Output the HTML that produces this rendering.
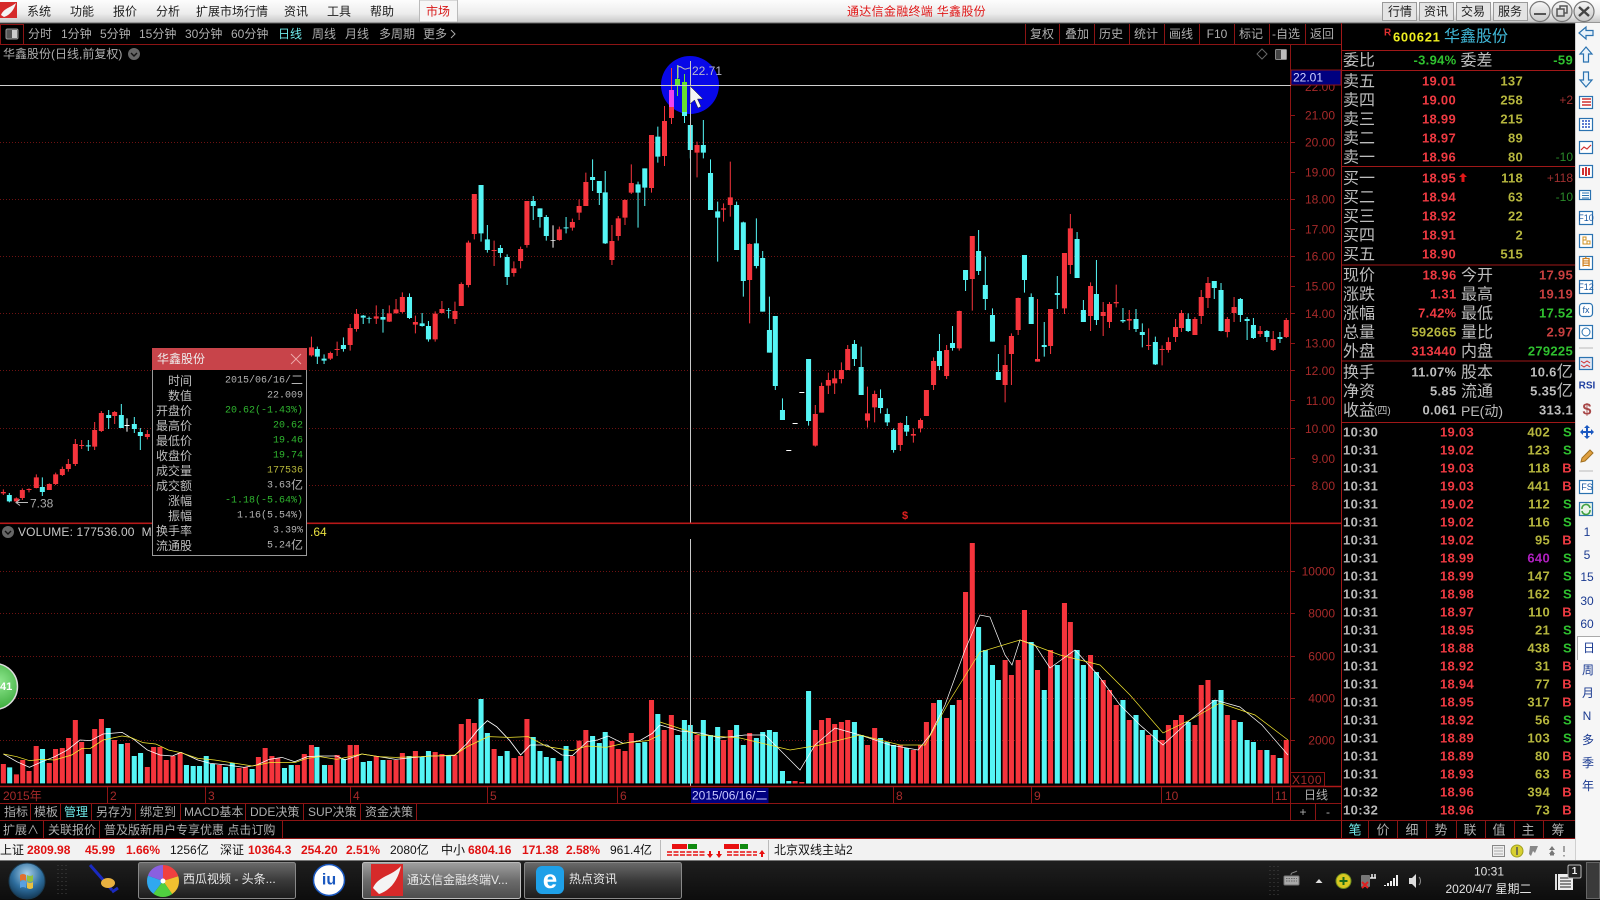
<!DOCTYPE html>
<html><head><meta charset="utf-8"><title>通达信金融终端 华鑫股份</title>
<style>
html,body{margin:0;padding:0;background:#000;width:1600px;height:900px;overflow:hidden}
svg{display:block;position:absolute;left:0;top:0}
text{font-family:"Liberation Sans","Noto Sans CJK SC",sans-serif;dominant-baseline:central;white-space:pre}
.m{font-size:12px;fill:#1c1c1c}
.g{font-size:12px;fill:#aeaeae}
.gm{font-size:12px;fill:#aeaeae;text-anchor:middle}
.a{font-size:12px;fill:#a62a2a;text-anchor:end}
.d{font-size:12px;fill:#a62a2a}
.l{font-size:16px;fill:#bdbdbd;transform:translateY(1.2px)}
.v{font-size:13px;font-weight:bold;text-anchor:end;letter-spacing:.3px}
.r{fill:#ef3a42}.y{fill:#b6b63e}.gr{fill:#2fc02f}.w{fill:#bdbdbd}
.s{font-size:12px;text-anchor:end}
.tm{font-size:13px;font-weight:bold;fill:#b8b8b8;letter-spacing:.4px}
.tl{font-size:12px;fill:#bdbdbd;text-anchor:end;transform:translateY(1px)}
.tv{font-family:"Liberation Mono","Noto Sans CJK SC",monospace;font-size:10px;fill:#b4b4b4;text-anchor:end;transform:translateY(1px)}
.st{font-size:12px;font-weight:bold;fill:#e01010}
.sk{font-size:12px;fill:#111}
.bl{font-size:12px;fill:#1a3a90;text-anchor:middle}
.tb{font-size:12px;fill:#e8e8e8}
</style></head><body>
<svg width="1600" height="900" viewBox="0 0 1600 900" xmlns="http://www.w3.org/2000/svg">
<defs>
<linearGradient id="tg" x1="0" y1="0" x2="0" y2="1"><stop offset="0" stop-color="#fdfdfd"/><stop offset=".6" stop-color="#ececec"/><stop offset="1" stop-color="#c4c4c4"/></linearGradient>
<linearGradient id="bar" x1="0" y1="0" x2="0" y2="1"><stop offset="0" stop-color="#1f1f1f"/><stop offset="1" stop-color="#0d0d0d"/></linearGradient>
<linearGradient id="btn" x1="0" y1="0" x2="0" y2="1"><stop offset="0" stop-color="#6a6a6a"/><stop offset=".5" stop-color="#3a3a3a"/><stop offset="1" stop-color="#1c1c1c"/></linearGradient>
<linearGradient id="btn2" x1="0" y1="0" x2="0" y2="1"><stop offset="0" stop-color="#a0a0a0"/><stop offset=".5" stop-color="#6c6c6c"/><stop offset="1" stop-color="#4c4c4c"/></linearGradient>
<radialGradient id="orb" cx=".5" cy=".3" r=".75"><stop offset="0" stop-color="#a8d0ea"/><stop offset=".55" stop-color="#2f6f9f"/><stop offset="1" stop-color="#0e2e48"/></radialGradient>
<radialGradient id="gc" cx=".6" cy=".4" r=".7"><stop offset="0" stop-color="#8fe88f"/><stop offset="1" stop-color="#2ea02e"/></radialGradient>
<linearGradient id="cb" x1="0" y1="0" x2="0" y2="1"><stop offset="0" stop-color="#f6f6f6"/><stop offset="1" stop-color="#c9c9c9"/></linearGradient>
</defs>
<rect width="1600" height="900" fill="#000"/>

<!-- title bar -->
<rect x="0" y="0" width="1600" height="23" fill="url(#tg)"/>
<rect x="0" y="22.5" width="1600" height="1" fill="#666"/>
<rect x="0" y="2" width="17" height="16" fill="#d62a2a"/>
<path d="M1 15C4 8 10 8 16 3C14 10 10 15 4 17Z" fill="#f4f4f4"/>
<text class="m" x="27" y="11.5">系统</text><text class="m" x="70" y="11.5">功能</text><text class="m" x="113" y="11.5">报价</text><text class="m" x="156" y="11.5">分析</text><text class="m" x="196" y="11.5">扩展市场行情</text><text class="m" x="284" y="11.5">资讯</text><text class="m" x="327" y="11.5">工具</text><text class="m" x="370" y="11.5">帮助</text>
<rect x="419.5" y="0" width="38" height="22" fill="#f6f6f6" stroke="#bbb"/>
<text x="426" y="11.5" style="font-size:12px;fill:#d81818">市场</text>
<text x="847" y="11.5" style="font-size:12px;fill:#e01818;letter-spacing:.3px">通达信金融终端 华鑫股份</text>
<g fill="#e4e4e4" stroke="#9a9a9a"><rect x="1382.5" y="2.5" width="34" height="18"/><rect x="1419.5" y="2.5" width="34" height="18"/><rect x="1456.5" y="2.5" width="34" height="18"/><rect x="1493.5" y="2.5" width="34" height="18"/></g>
<text class="m" x="1388" y="11.5">行情</text><text class="m" x="1424" y="11.5">资讯</text><text class="m" x="1461" y="11.5">交易</text><text class="m" x="1498" y="11.5">服务</text>
<g fill="url(#cb)" stroke="#777" stroke-width="1.2"><circle cx="1540" cy="11.5" r="10"/><circle cx="1562" cy="11.5" r="10"/><circle cx="1584" cy="11.5" r="10"/></g>
<path d="M1534 14H1546" stroke="#555" stroke-width="2"/>
<path d="M1557 9h7v7h-7zM1560 9V6h7v7h-3" fill="none" stroke="#555" stroke-width="1.5"/>
<path d="M1579 7l10 9M1589 7l-10 9" stroke="#444" stroke-width="2.4"/>

<!-- toolbar -->
<rect x="0.5" y="24.5" width="23" height="20" fill="none" stroke="#8c1414"/>
<rect x="6" y="29" width="12" height="10" rx="1.5" fill="#555" stroke="#999"/><rect x="12" y="30" width="5" height="8" fill="#ccc"/>
<text class="g" x="28" y="34">分时</text><text class="g" x="61" y="34">1分钟</text><text class="g" x="100" y="34">5分钟</text><text class="g" x="139" y="34">15分钟</text><text class="g" x="185" y="34">30分钟</text><text class="g" x="231" y="34">60分钟</text>
<text x="278" y="34" style="font-size:12px;fill:#6fe8e8">日线</text>
<text class="g" x="312" y="34">周线</text><text class="g" x="345" y="34">月线</text><text class="g" x="379" y="34">多周期</text><text class="g" x="423" y="34">更多</text>
<path d="M451 30l4 4l-4 4" fill="none" stroke="#aaa"/>
<path d="M1025.5 24V44M1059.5 24V44M1094.5 24V44M1129.5 24V44M1164.5 24V44M1199.5 24V44M1234.5 24V44M1269.5 24V44M1305.5 24V44" stroke="#8c1414"/>
<text class="gm" x="1042" y="34">复权</text><text class="gm" x="1077" y="34">叠加</text><text class="gm" x="1111" y="34">历史</text><text class="gm" x="1146" y="34">统计</text><text class="gm" x="1181" y="34">画线</text><text class="gm" x="1217" y="34">F10</text><text class="gm" x="1251" y="34">标记</text><text class="gm" x="1286" y="34">-自选</text><text class="gm" x="1322" y="34">返回</text>
<rect x="0" y="44" width="1341" height="1" fill="#8c1414"/>

<!-- chart header -->
<text class="g" x="3" y="54">华鑫股份(日线,前复权)</text>
<circle cx="134" cy="54" r="6" fill="#666"/><path d="M131 53l3 3l3-3" fill="none" stroke="#111" stroke-width="1.4"/>
<path d="M1262 49l5 5l-5 5l-5-5z" fill="none" stroke="#666"/>
<rect x="1275.5" y="49.5" width="11" height="10" rx="1" fill="#444" stroke="#888"/><rect x="1281" y="50" width="5" height="9" fill="#bbb"/>

<!-- grid -->
<path d="M0 142.5H1290M0 199.5H1290M0 256.5H1290M0 313.5H1290M0 370.5H1290M0 428.5H1290M0 485.5H1290M0 571.5H1290M0 613.5H1290M0 656.5H1290M0 698.5H1290M0 740.5H1290" stroke="#6e1212" stroke-dasharray="1 2"/>

<!-- price axis -->
<path d="M1290.5 45V820" stroke="#8c1414"/>
<path d="M1291 115.5h4M1291 142.5h4M1291 172.5h4M1291 199.5h4M1291 229.5h4M1291 256.5h4M1291 286.5h4M1291 313.5h4M1291 343.5h4M1291 370.5h4M1291 400.5h4M1291 428.5h4M1291 458.5h4M1291 485.5h4M1291 571.5h4M1291 613.5h4M1291 656.5h4M1291 698.5h4M1291 740.5h4" stroke="#8c1414"/>
<text class="a" x="1335" y="87">22.00</text>
<text class="a" x="1335" y="115.5">21.00</text><text class="a" x="1335" y="142.5">20.00</text><text class="a" x="1335" y="172.5">19.00</text><text class="a" x="1335" y="199.5">18.00</text><text class="a" x="1335" y="229.5">17.00</text><text class="a" x="1335" y="256.5">16.00</text><text class="a" x="1335" y="286.5">15.00</text><text class="a" x="1335" y="314">14.00</text><text class="a" x="1335" y="343.5">13.00</text><text class="a" x="1335" y="371">12.00</text><text class="a" x="1335" y="401">11.00</text><text class="a" x="1335" y="429">10.00</text><text class="a" x="1335" y="459">9.00</text><text class="a" x="1335" y="486">8.00</text>
<text class="a" x="1335" y="571.5">10000</text><text class="a" x="1335" y="613.5">8000</text><text class="a" x="1335" y="656.5">6000</text><text class="a" x="1335" y="698.5">4000</text><text class="a" x="1335" y="740.5">2000</text>

<!-- blue highlight -->
<circle cx="690" cy="85" r="29" fill="#0808e8"/>

<!-- candles A -->
<g transform="translate(0,340) scale(.33333)" fill="none">
<path stroke="#f5343c" stroke-width="3" d="M10 448V465M49 472V490M67 445V480M87 445V457M109 403V445M148 430V450M167 398V435M187 380V408M205 357V395M226 297V378M245 300V327M284 246V330M304 213V276M344 213V252M442 270V298"/>
<path stroke="#f5343c" stroke-width="15" d="M10 456V460M49 475V484M67 450V474M87 447V450M109 412V444M148 432V450M167 403V432M187 387V405M205 372V387M226 312V372M245 315V318M284 270V320M304 219V273M344 216V228M442 282V291"/>
<path stroke="#55f5f5" stroke-width="3" d="M28 459V487M127 412V468M265 300V333M326 210V267M364 192V264M403 231V279M421 264V330"/>
<path stroke="#55f5f5" stroke-width="15" d="M28 465V484M127 441V456M265 316V319M326 225V234M364 225V264M403 252V267M421 276V288"/>
<path stroke="#fff" stroke-width="3" d="M381 235V275"/><path stroke="#fff" stroke-width="15" d="M381 255V258"/>
</g>
<!-- candles B -->
<g transform="translate(0,120) scale(.42087,.33333)" fill="none">
<path stroke="#f5343c" stroke-width="2.4" d="M740 650V710M785 695V720M801 665V708M832 612V692M847 567V635M894 556V612M925 556V606M941 537V580M956 517V580M987 587V640M1034 574V665M1050 543V580M1081 545V612M1096 487V558M1113 362V502M1127 222V358M1174 362V438M1221 424V470M1237 380V445M1252 243V383M1329 320V362M1360 296V332M1376 238V300M1392 158V258M1454 315V435M1469 288V362M1485 238V315M1500 133V222M1548 45V218"/>
<path stroke="#f5343c" stroke-width="12" d="M740 682V706M785 699V716M801 687V690M832 624V675M847 582V627M894 589V596M925 580V605M941 568V580M956 531V576M987 606V614M1034 581V658M1050 567V579M1081 573V597M1096 492V558M1113 368V495M1127 222V342M1174 390V393M1221 445V459M1237 387V423M1252 243V375M1329 328V360M1360 306V323M1376 258V278M1392 186V258M1454 363V420M1469 295V348M1485 240V293M1500 189V218M1548 45V204"/>
<path stroke="#55f5f5" stroke-width="2.4" d="M754 680V732M770 703V732M816 652V695M863 585V612M877 590V610M910 567V638M973 520V597M1003 579V620M1018 603V665M1066 564V595M1143 195V365M1158 315V398M1189 375V413M1205 403V495M1267 228V300M1283 265V323M1298 285V362M1345 291V340M1408 118V213M1424 183V255M1438 153V372M1516 185V323M1532 145V258M1563 20V128"/>
<path stroke="#55f5f5" stroke-width="12" d="M754 687V710M770 716V722M816 675V687M863 587V593M877 594V596M910 591V599M973 531V594M1003 610V618M1018 618V658M1066 570V572M1143 195V340M1158 358V390M1189 384V399M1205 411V471M1267 243V258M1283 265V291M1298 291V348M1345 322V325M1408 171V180M1424 183V219M1438 217V370M1516 193V218M1532 145V203M1563 50V110"/>
<path stroke="#fff" stroke-width="2.4" d="M1314 316V383"/><path stroke="#fff" stroke-width="12" d="M1314 360V362"/>
</g>
<!-- peak candles -->
<path fill="none" stroke="#f5343c" d="M664.5 106V166M671.5 68V124"/>
<path fill="none" stroke="#f5343c" stroke-width="5" d="M664.5 121V156M671.5 107V118"/>
<path fill="none" stroke="#ee44ee" stroke-width="5" d="M671.5 90V107"/>
<path fill="none" stroke="#66e030" d="M677.5 65V96M684.5 74V112"/>
<path fill="none" stroke="#66e030" stroke-width="5" d="M677.5 79V85M684.5 82V112"/>
<path fill="none" stroke="#55f5f5" d="M684.5 112V123"/><path fill="none" stroke="#55f5f5" stroke-width="5" d="M684.5 112V116"/>
<!-- candles C -->
<g transform="translate(660,120) scale(.42087,.33333)" fill="none">
<path stroke="#f5343c" stroke-width="2.4" d="M88 65V172M151 250V305M167 125V290M213 370V610M369 855V980M384 788V878M400 758V822M415 750V822M431 727V790M446 675V750M493 800V923M510 812V907M571 907V993M602 925V968M619 895V937M633 810V888M650 712V810M681 675V777M711 572V692M742 348V572M820 675V847M835 640V795M851 533V645M897 537V725M928 567V702M961 399V582M975 282V462M1023 487V633M1053 546V648M1068 546V624M1084 494V562M1115 570V630M1161 625V690M1193 676V736M1208 652V698M1225 597V666M1239 570V636M1271 591V645M1286 510V612M1302 471V564M1348 591V652M1364 531V606M1426 618V651M1457 633V693M1488 594V654"/>
<path stroke="#f5343c" stroke-width="12" d="M88 75V98M151 265V269M167 232V255M213 372V480M369 882V977M384 798V878M400 780V797M415 775V790M431 750V777M446 687V750M493 880V902M510 822V862M571 909V975M602 942V947M619 900V925M633 810V888M650 723V795M681 690V768M711 573V685M742 348V477M820 735V795M835 648V702M851 534V630M897 717V725M928 567V678M961 399V565M975 325V435M1023 498V588M1053 576V588M1068 552V606M1084 546V550M1115 597V602M1161 675V678M1193 687V690M1208 666V690M1225 621V651M1239 579V624M1271 597V645M1286 531V588M1302 489V534M1348 597V636M1364 561V579M1426 633V642M1457 657V690M1488 600V651"/>
<path stroke="#55f5f5" stroke-width="2.4" d="M72 15V115M103 0V115M120 118V270M137 245V425M182 245V390M198 305V530M229 295V445M244 393V575M260 530V698M274 588V810M291 835V900M353 717V917M462 660V738M478 680V825M524 808V880M540 865V918M555 925V998M586 888V948M664 642V750M695 618V692M726 450V513M757 330V465M773 410V570M790 565V665M804 702V780M866 405V518M882 520V612M913 606V710M944 468V567M991 336V474M1006 540V606M1037 420V615M1100 564V609M1131 567V636M1146 610V682M1177 650V735M1255 580V636M1317 483V537M1333 489V634M1379 534V606M1395 591V660M1410 594V657M1442 630V666M1473 636V669"/>
<path stroke="#55f5f5" stroke-width="12" d="M72 15V90M103 75V98M120 159V270M137 274V293M182 255V390M198 307V483M229 370V438M244 414V575M260 630V698M274 588V798M291 870V900M353 717V903M462 672V717M478 741V825M524 834V864M540 882V907M555 930V990M586 915V935M664 693V738M695 669V684M726 450V480M757 393V453M773 495V537M790 585V665M804 756V780M866 405V480M882 531V612M913 675V681M944 519V525M991 357V474M1006 570V606M1037 522V600M1100 600V604M1131 597V627M1146 636V645M1177 666V733M1255 597V633M1317 483V504M1333 510V633M1379 537V585M1395 597V603M1410 615V654M1442 633V651M1473 651V657"/>
<path stroke="#fff" stroke-width="12" d="M306 990V993M321 909V912M337 816V819"/>
</g>
<text x="905" y="516" text-anchor="middle" style="font-size:11px;font-weight:bold;fill:#e02020">$</text>

<!-- volume bars -->
<g transform="translate(0,530) scale(.42087,.33333)" fill="none" stroke-width="12">
<path stroke="#f5343c" d="M8 702V760M39 733V760M54 690V760M69 723V760M86 648V760M117 699V760M132 657V760M148 654V760M163 624V760M179 570V760M194 636V760M225 597V760M241 567V760M272 630V760M303 639V760M350 711V760M365 651V760M380 651V760M395 690V760M411 678V760M428 669V760M521 705V760M568 714V760M583 711V760M614 681V760M630 654V760M646 678V760M660 684V760M707 705V760M723 672V760M740 645V760M785 705V760M801 675V760M832 645V760M847 645V760M894 678V760M925 690V760M941 690V760M956 669V760M987 663V760M1034 666V760M1050 672V760M1081 675V760M1096 582V760M1113 567V760M1127 579V760M1174 657V760M1221 684V760M1237 678V760M1252 567V760M1329 693V760M1360 678V760M1376 632V760M1392 600V760M1454 633V760M1469 657V760M1485 663V760M1500 609V760M1548 510V760"/>
<path stroke="#55f5f5" d="M23 712V760M101 657V760M210 672V760M257 594V760M288 642V760M319 678V760M334 669V760M443 705V760M459 708V760M474 708V760M490 678V760M505 702V760M536 711V760M552 699V760M599 717V760M676 714V760M692 705V760M753 651V760M771 705V760M816 687V760M863 696V760M878 693V760M910 690V760M972 678V760M1003 681V760M1018 663V760M1066 675V760M1143 507V760M1158 609V760M1189 678V760M1205 663V760M1267 621V760M1283 663V760M1298 681V760M1314 684V760M1345 648V760M1408 618V760M1424 639V760M1438 606V760M1516 639V760M1532 636V760M1563 552V760"/>
</g>
<g transform="translate(660,0) scale(.42087,1)" fill="none" stroke-width="12">
<path stroke="#f5343c" d="M10 730V783.5M27 715V783.5M88 735V783.5M151 740V783.5M167 730V783.5M213 733V783.5M321 781V783.5M337 782V783.5M369 730V783.5M384 720V783.5M400 718V783.5M415 724V783.5M431 722V783.5M446 720V783.5M493 745V783.5M510 728V783.5M571 745V783.5M602 750V783.5M619 745V783.5M633 722V783.5M650 703V783.5M681 718V783.5M711 700V783.5M726 592V783.5M742 543V783.5M820 660V783.5M835 675V783.5M851 660V783.5M866 610V783.5M897 670V783.5M928 650V783.5M961 603V783.5M975 622V783.5M1023 655V783.5M1053 680V783.5M1068 690V783.5M1084 705V783.5M1115 720V783.5M1161 735V783.5M1193 740V783.5M1208 725V783.5M1225 720V783.5M1239 715V783.5M1271 725V783.5M1286 685V783.5M1302 680V783.5M1348 715V783.5M1364 720V783.5M1426 750V783.5M1457 755V783.5M1488 740V783.5"/>
<path stroke="#55f5f5" d="M42 735V783.5M58 720V783.5M72 725V783.5M103 720V783.5M120 735V783.5M137 727V783.5M182 725V783.5M198 745V783.5M229 738V783.5M244 732V783.5M260 730V783.5M274 732V783.5M291 771V783.5M306 781V783.5M353 691V783.5M462 722V783.5M478 735V783.5M524 738V783.5M540 742V783.5M555 745V783.5M586 748V783.5M664 700V783.5M695 705V783.5M757 627V783.5M773 650V783.5M790 665V783.5M804 680V783.5M882 642V783.5M913 690V783.5M944 665V783.5M991 650V783.5M1006 665V783.5M1037 672V783.5M1100 700V783.5M1131 715V783.5M1146 730V783.5M1177 730V783.5M1255 722V783.5M1317 700V783.5M1333 690V783.5M1379 722V783.5M1395 740V783.5M1410 742V783.5M1442 750V783.5M1473 758V783.5"/>
</g>
<!-- MA lines -->
<g transform="translate(0,530) scale(.42087,.33333)" fill="none" stroke-width="2.2">
<polyline stroke="#fff" points="8,672 40,695 70,712 100,695 130,680 160,660 190,630 215,632 245,612 290,607 320,630 350,660 380,675 410,678 430,667 470,690 500,700 540,705 580,712 610,705 640,688 670,682 700,695 730,680 760,678 800,678 820,690 860,672 900,680 940,688 980,683 1020,678 1080,677 1110,640 1135,600 1158,572 1180,590 1210,630 1237,675 1260,645 1300,645 1335,675 1360,677 1395,635 1420,630 1445,618 1480,640 1520,632 1550,610 1568,585"/>
<polyline stroke="#f5e830" points="8,672 40,680 70,692 100,688 130,690 170,675 195,655 215,655 245,630 290,618 310,622 340,638 370,642 400,660 430,668 470,685 510,690 560,700 600,708 640,698 700,698 730,685 760,680 800,688 860,672 900,680 940,682 1000,680 1080,675 1110,650 1160,620 1210,622 1255,620 1300,650 1360,662 1395,648 1440,652 1490,638 1540,632 1568,615"/>
</g>
<polyline fill="none" stroke="#fff" stroke-width=".7" points="660,725 680,731 700,733 720,738 745,735 765,735 785,755 800,770 815,745 835,728 860,735 890,745 918,750 930,735 945,705 965,650 980,615 990,617 1005,655 1012,665 1020,640 1035,645 1050,668 1075,650 1098,675 1120,705 1140,725 1163,745 1190,720 1215,700 1240,707 1262,725 1288,755"/>
<polyline fill="none" stroke="#f5e830" stroke-width=".7" points="660,722 700,735 740,738 790,750 820,745 860,735 900,745 925,745 950,700 980,652 1020,640 1060,655 1100,665 1130,695 1163,733 1190,720 1220,703 1255,715 1288,740"/>

<!-- crosshair -->
<path d="M0 85.5H1291" stroke="#cfcfcf"/>
<path d="M690.5 61V523M690.5 539V786" stroke="#c8c8c8"/>
<path d="M678 65V78M678 67c3-2 5 3 8 2s3-1 4-1" fill="none" stroke="#bbb"/>
<text x="692" y="71" style="font-size:12px;fill:#b8b8cc">22.71</text>
<path d="M690 86V104L694.5 100L698 108L701 106.5L697.5 99H703Z" fill="#f4f4f4" stroke="#222" stroke-width=".5"/>
<rect x="1291" y="70" width="50" height="15" fill="#000080" stroke="#8c1414"/>
<text x="1293" y="77.5" style="font-size:12px;fill:#d0d0ff">22.01</text>

<!-- volume header -->
<rect x="0" y="522.5" width="1341" height="1.6" fill="#b81818"/>
<circle cx="8" cy="532" r="6" fill="#666"/><path d="M5 531l3 3l3-3" fill="none" stroke="#111" stroke-width="1.4"/>
<text x="18" y="532" style="font-size:12px;fill:#c8c8c8;letter-spacing:.15px">VOLUME: 177536.00  MA</text>
<text x="310" y="532" style="font-size:12px;fill:#e8e040">.64</text>

<!-- tooltip -->
<rect x="152.5" y="348.5" width="154" height="207" fill="#000" stroke="#9a9a9a"/>
<rect x="152" y="348" width="155" height="22" fill="#c8444a"/>
<text x="157" y="359" style="font-size:12px;fill:#eee">华鑫股份</text>
<path d="M291 354l10 10M301 354l-10 10" stroke="#eaa" stroke-width=".9"/>
<text class="tl" x="192" y="380">时间</text><text class="tl" x="192" y="395">数值</text><text class="tl" x="192" y="410">开盘价</text><text class="tl" x="192" y="425">最高价</text><text class="tl" x="192" y="440">最低价</text><text class="tl" x="192" y="455">收盘价</text><text class="tl" x="192" y="470">成交量</text><text class="tl" x="192" y="485">成交额</text><text class="tl" x="192" y="500">涨幅</text><text class="tl" x="192" y="515">振幅</text><text class="tl" x="192" y="530">换手率</text><text class="tl" x="192" y="545">流通股</text>
<text class="tv" x="303" y="380">2015/06/16/<tspan style="font-size:12px">二</tspan></text>
<text class="tv" x="303" y="395">22.009</text>
<text class="tv" x="303" y="410" style="fill:#2fb52f">20.62(-1.43%)</text>
<text class="tv" x="303" y="425" style="fill:#2fb52f">20.62</text>
<text class="tv" x="303" y="440" style="fill:#2fb52f">19.46</text>
<text class="tv" x="303" y="455" style="fill:#2fb52f">19.74</text>
<text class="tv" x="303" y="470" style="fill:#b5b53a">177536</text>
<text class="tv" x="303" y="485">3.63<tspan style="font-size:12px">亿</tspan></text>
<text class="tv" x="303" y="500" style="fill:#2fb52f">-1.18(-5.64%)</text>
<text class="tv" x="303" y="515">1.16(5.54%)</text>
<text class="tv" x="303" y="530">3.39%</text>
<text class="tv" x="303" y="545">5.24<tspan style="font-size:12px">亿</tspan></text>

<!-- low marker -->
<path d="M28 502.5H17M20 499.5l-4 3l4 3" fill="none" stroke="#bbb"/>
<text x="30" y="503.5" style="font-size:12px;fill:#aaa">7.38</text>

<!-- green ball -->
<circle cx="-5.5" cy="686.5" r="23" fill="url(#gc)" stroke="#ddd" stroke-width="1.5"/>
<text x="0" y="687" style="font-size:11px;font-weight:bold;fill:#fff">41</text>

<!-- bottom axis -->
<path d="M0 786.5H1341" stroke="#b01818" stroke-width="1.6"/>
<rect x="1290.5" y="772.5" width="34" height="13.5" fill="none" stroke="#8c1414"/>
<text x="1292" y="780" style="font-size:12px;fill:#a62a2a;letter-spacing:.5px">X100</text>
<path d="M0 803.5H1341M0 820.5H1575M0 838.5H1575" stroke="#8c1414"/>
<path d="M107.5 787V803M205.5 787V803M350.5 787V803M487.5 787V803M617.5 787V803M893.5 787V803M1031.5 787V803M1161.5 787V803M1272.5 787V803M1315.5 804V820" stroke="#8c1414"/>
<text class="d" x="3" y="796">2015年</text><text class="d" x="110" y="796">2</text><text class="d" x="208" y="796">3</text><text class="d" x="353" y="796">4</text><text class="d" x="490" y="796">5</text><text class="d" x="620" y="796">6</text><text class="d" x="896" y="796">8</text><text class="d" x="1034" y="796">9</text><text class="d" x="1165" y="796">10</text><text class="d" x="1275" y="796">11</text>
<rect x="691" y="788" width="77.5" height="15" fill="#000080"/>
<text x="692" y="795.5" style="font-size:12px;fill:#c8c8ff">2015/06/16/二</text>
<text class="gm" x="1316" y="795">日线</text>
<text class="gm" x="1303" y="812">+</text><text class="gm" x="1328" y="812">-</text>

<!-- button rows -->
<path d="M30.5 804V820M60.5 804V820M91.5 804V820M135.5 804V820M180.5 804V820M245.5 804V820M303.5 804V820M360.5 804V820M416.5 804V820M43.5 821V838M99.5 821V838M282.5 821V838" stroke="#8c1414"/>
<text class="g" x="4" y="812">指标</text><text class="g" x="34" y="812">模板</text><text x="64" y="812" style="font-size:12px;fill:#6fe8e8">管理</text><text class="g" x="96" y="812">另存为</text><text class="g" x="140" y="812">绑定到</text><text class="g" x="184" y="812">MACD基本</text><text class="g" x="250" y="812">DDE决策</text><text class="g" x="308" y="812">SUP决策</text><text class="g" x="365" y="812">资金决策</text>
<text class="g" x="3" y="830">扩展∧</text><text class="g" x="48" y="830">关联报价</text><text class="g" x="104" y="830">普及版新用户专享优惠 点击订购</text>

<!-- right panel -->
<rect x="1341" y="23" width="1" height="815" fill="#a01818"/>
<text x="1384" y="33" style="font-size:10px;font-weight:bold;fill:#e03030">R</text>
<text x="1393" y="37" style="font-size:13px;font-weight:bold;fill:#f0f020;letter-spacing:.7px">600621</text>
<text x="1444" y="37" style="font-size:16px;fill:#40b8d8">华鑫股份</text>
<path d="M1342 50.5H1575M1342 70.5H1575M1342 166.5H1575M1342 265H1575M1342 361H1575M1342 422.5H1575" stroke="#a01818"/>
<text class="l" x="1343" y="60">委比</text><text class="v gr" x="1456.5" y="60">-3.94%</text><text class="l" x="1460.5" y="60">委差</text><text class="v gr" x="1573" y="60">-59</text>

<text class="l" x="1343" y="81">卖五</text><text class="v r" x="1456" y="81">19.01</text><text class="v y" x="1523" y="81">137</text>
<text class="l" x="1343" y="100">卖四</text><text class="v r" x="1456" y="100">19.00</text><text class="v y" x="1523" y="100">258</text><text class="s" x="1573" y="100" fill="#a03030">+2</text>
<text class="l" x="1343" y="119">卖三</text><text class="v r" x="1456" y="119">18.99</text><text class="v y" x="1523" y="119">215</text>
<text class="l" x="1343" y="138">卖二</text><text class="v r" x="1456" y="138">18.97</text><text class="v y" x="1523" y="138">89</text>
<text class="l" x="1343" y="157">卖一</text><text class="v r" x="1456" y="157">18.96</text><text class="v y" x="1523" y="157">80</text><text class="s" x="1573" y="157" fill="#2a8a2a">-10</text>
<text class="l" x="1343" y="178">买一</text><text class="v r" x="1456" y="178">18.95</text><path d="M1463 173l4 4h-2.5v5h-3v-5H1459z" fill="#e01818"/><text class="v y" x="1523" y="178">118</text><text class="s" x="1573" y="178" fill="#a03030">+118</text>
<text class="l" x="1343" y="197">买二</text><text class="v r" x="1456" y="197">18.94</text><text class="v y" x="1523" y="197">63</text><text class="s" x="1573" y="197" fill="#2a8a2a">-10</text>
<text class="l" x="1343" y="216">买三</text><text class="v r" x="1456" y="216">18.92</text><text class="v y" x="1523" y="216">22</text>
<text class="l" x="1343" y="235">买四</text><text class="v r" x="1456" y="235">18.91</text><text class="v y" x="1523" y="235">2</text>
<text class="l" x="1343" y="254">买五</text><text class="v r" x="1456" y="254">18.90</text><text class="v y" x="1523" y="254">515</text>

<text class="l" x="1343" y="275">现价</text><text class="v r" x="1456.5" y="275">18.96</text><text class="l" x="1461" y="275">今开</text><text class="v r" x="1573" y="275" style="fill:#c84040">17.95</text>
<text class="l" x="1343" y="294">涨跌</text><text class="v r" x="1456.5" y="294">1.31</text><text class="l" x="1461" y="294">最高</text><text class="v r" x="1573" y="294" style="fill:#c84040">19.19</text>
<text class="l" x="1343" y="313">涨幅</text><text class="v r" x="1456.5" y="313">7.42%</text><text class="l" x="1461" y="313">最低</text><text class="v gr" x="1573" y="313">17.52</text>
<text class="l" x="1343" y="332">总量</text><text class="v y" x="1456.5" y="332">592665</text><text class="l" x="1461" y="332">量比</text><text class="v r" x="1573" y="332" style="fill:#c84040">2.97</text>
<text class="l" x="1343" y="351">外盘</text><text class="v r" x="1456.5" y="351">313440</text><text class="l" x="1461" y="351">内盘</text><text class="v gr" x="1573" y="351">279225</text>
<text class="l" x="1343" y="372">换手</text><text class="v w" x="1456.5" y="372">11.07%</text><text class="l" x="1461" y="372">股本</text><text class="v w" x="1573" y="372">10.6<tspan style="font-size:16px;font-weight:normal">亿</tspan></text>
<text class="l" x="1343" y="391">净资</text><text class="v w" x="1456.5" y="391">5.85</text><text class="l" x="1461" y="391">流通</text><text class="v w" x="1573" y="391">5.35<tspan style="font-size:16px;font-weight:normal">亿</tspan></text>
<text class="l" x="1343" y="410">收益<tspan style="font-size:10px" dx="-1">(四)</tspan></text><text class="v w" x="1456.5" y="410">0.061</text><text class="l" x="1461" y="410" style="font-size:14px">PE(动)</text><text class="v w" x="1573" y="410">313.1</text>

<!-- ticks -->
<g>
<text class="tm" x="1343" y="432">10:30</text><text class="v r" x="1474" y="432">19.03</text><text class="v y" x="1550" y="432">402</text><text class="v gr" x="1572" y="432">S</text>
<text class="tm" x="1343" y="450">10:31</text><text class="v r" x="1474" y="450">19.02</text><text class="v y" x="1550" y="450">123</text><text class="v gr" x="1572" y="450">S</text>
<text class="tm" x="1343" y="468">10:31</text><text class="v r" x="1474" y="468">19.03</text><text class="v y" x="1550" y="468">118</text><text class="v r" x="1572" y="468">B</text>
<text class="tm" x="1343" y="486">10:31</text><text class="v r" x="1474" y="486">19.03</text><text class="v y" x="1550" y="486">441</text><text class="v r" x="1572" y="486">B</text>
<text class="tm" x="1343" y="504">10:31</text><text class="v r" x="1474" y="504">19.02</text><text class="v y" x="1550" y="504">112</text><text class="v gr" x="1572" y="504">S</text>
<text class="tm" x="1343" y="522">10:31</text><text class="v r" x="1474" y="522">19.02</text><text class="v y" x="1550" y="522">116</text><text class="v gr" x="1572" y="522">S</text>
<text class="tm" x="1343" y="540">10:31</text><text class="v r" x="1474" y="540">19.02</text><text class="v y" x="1550" y="540">95</text><text class="v r" x="1572" y="540">B</text>
<text class="tm" x="1343" y="558">10:31</text><text class="v r" x="1474" y="558">18.99</text><text class="v" x="1550" y="558" style="fill:#b020c0">640</text><text class="v gr" x="1572" y="558">S</text>
<text class="tm" x="1343" y="576">10:31</text><text class="v r" x="1474" y="576">18.99</text><text class="v y" x="1550" y="576">147</text><text class="v gr" x="1572" y="576">S</text>
<text class="tm" x="1343" y="594">10:31</text><text class="v r" x="1474" y="594">18.98</text><text class="v y" x="1550" y="594">162</text><text class="v gr" x="1572" y="594">S</text>
<text class="tm" x="1343" y="612">10:31</text><text class="v r" x="1474" y="612">18.97</text><text class="v y" x="1550" y="612">110</text><text class="v r" x="1572" y="612">B</text>
<text class="tm" x="1343" y="630">10:31</text><text class="v r" x="1474" y="630">18.95</text><text class="v y" x="1550" y="630">21</text><text class="v gr" x="1572" y="630">S</text>
<text class="tm" x="1343" y="648">10:31</text><text class="v r" x="1474" y="648">18.88</text><text class="v y" x="1550" y="648">438</text><text class="v gr" x="1572" y="648">S</text>
<text class="tm" x="1343" y="666">10:31</text><text class="v r" x="1474" y="666">18.92</text><text class="v y" x="1550" y="666">31</text><text class="v r" x="1572" y="666">B</text>
<text class="tm" x="1343" y="684">10:31</text><text class="v r" x="1474" y="684">18.94</text><text class="v y" x="1550" y="684">77</text><text class="v r" x="1572" y="684">B</text>
<text class="tm" x="1343" y="702">10:31</text><text class="v r" x="1474" y="702">18.95</text><text class="v y" x="1550" y="702">317</text><text class="v r" x="1572" y="702">B</text>
<text class="tm" x="1343" y="720">10:31</text><text class="v r" x="1474" y="720">18.92</text><text class="v y" x="1550" y="720">56</text><text class="v gr" x="1572" y="720">S</text>
<text class="tm" x="1343" y="738">10:31</text><text class="v r" x="1474" y="738">18.89</text><text class="v y" x="1550" y="738">103</text><text class="v gr" x="1572" y="738">S</text>
<text class="tm" x="1343" y="756">10:31</text><text class="v r" x="1474" y="756">18.89</text><text class="v y" x="1550" y="756">80</text><text class="v r" x="1572" y="756">B</text>
<text class="tm" x="1343" y="774">10:31</text><text class="v r" x="1474" y="774">18.93</text><text class="v y" x="1550" y="774">63</text><text class="v r" x="1572" y="774">B</text>
<text class="tm" x="1343" y="792">10:32</text><text class="v r" x="1474" y="792">18.96</text><text class="v y" x="1550" y="792">394</text><text class="v r" x="1572" y="792">B</text>
<text class="tm" x="1343" y="810">10:32</text><text class="v r" x="1474" y="810">18.96</text><text class="v y" x="1550" y="810">73</text><text class="v r" x="1572" y="810">B</text>
</g>

<!-- panel tabs -->
<path d="M1368.5 821V838M1397.5 821V838M1426.5 821V838M1456.5 821V838M1485.5 821V838M1514.5 821V838M1543.5 821V838" stroke="#8c1414"/>
<text x="1355" y="830" text-anchor="middle" style="font-size:13px;fill:#6fe8e8">笔</text>
<g style="font-size:13px"><text class="gm" style="font-size:13px" x="1383" y="830">价</text><text class="gm" style="font-size:13px" x="1412" y="830">细</text><text class="gm" style="font-size:13px" x="1441" y="830">势</text><text class="gm" style="font-size:13px" x="1470" y="830">联</text><text class="gm" style="font-size:13px" x="1499" y="830">值</text><text class="gm" style="font-size:13px" x="1528" y="830">主</text><text class="gm" style="font-size:13px" x="1558" y="830">筹</text></g>

<!-- sidebar -->
<rect x="1575" y="23" width="25" height="837" fill="#f6f6f6"/>
<path d="M1575.5 23V860" stroke="#d0d0d0"/>
<g fill="#e8f2fa" stroke="#2a72b0" stroke-width="1.2">
<path d="M1579 33l7-6v3.5h7v5h-7V39z"/>
<path d="M1586 47l6 7h-3.5v8h-5v-8H1580z"/>
<path d="M1586 87l-6-7h3.5v-8h5v8h3.5z"/>
<rect x="1579.5" y="96.5" width="13" height="12" fill="#fff"/>
<rect x="1579.5" y="118.5" width="13" height="12" fill="#fff"/>
<rect x="1579.5" y="141.5" width="13" height="12" fill="#fff"/>
<rect x="1579.5" y="165.5" width="13" height="12" fill="#fff"/>
<rect x="1579.5" y="190.5" width="11" height="9" fill="#fff"/>
<rect x="1579.5" y="211.5" width="13" height="13" fill="#fff"/>
<rect x="1579.5" y="234.5" width="13" height="13" fill="#fff"/>
<rect x="1579.5" y="256.5" width="13" height="13" fill="#fff"/>
<rect x="1579.5" y="280.5" width="13" height="13" fill="#fff"/>
<rect x="1579.5" y="303.5" width="13" height="13" rx="3" fill="#fff"/>
<rect x="1579.5" y="325.5" width="13" height="13" fill="#fff"/>
<rect x="1579.5" y="357.5" width="13" height="12" fill="#dde6f4"/>
<rect x="1579.5" y="480.5" width="13" height="13" fill="#fff"/>
<rect x="1579.5" y="502.5" width="13" height="13" fill="#e8f4e8"/>
</g>
<path d="M1582 99h9M1582 102h9M1582 105h9" stroke="#d03030" stroke-width="1.4"/>
<path d="M1582 121h8M1582 124h8M1582 127h8" stroke="#2a50c0" stroke-width="1.6" stroke-dasharray="2 1"/>
<path d="M1581 150l3-3l3 2l4-4" fill="none" stroke="#d03030" stroke-width="1.2"/>
<path d="M1583 168v7M1586 167v9M1589 168v7" stroke="#d03030" stroke-width="2"/>
<path d="M1582 193h7M1582 195.5h7M1582 198h7" stroke="#2a72b0"/>
<text x="1586" y="218" text-anchor="middle" style="font-size:9px;fill:#1a58a0">F10</text>
<path d="M1583 237h3v3h-3zM1587 241h3v3h-3zM1583 238v6h4" fill="none" stroke="#d09020"/>
<text x="1586" y="263" text-anchor="middle" style="font-size:10px;font-weight:bold;fill:#d08020">自</text>
<text x="1586" y="287" text-anchor="middle" style="font-size:9px;fill:#1a58a0">F12</text>
<text x="1586" y="310" text-anchor="middle" style="font-size:9px;fill:#1a58a0">fx</text>
<circle cx="1586" cy="332" r="4" fill="none" stroke="#2a72b0"/>
<path d="M1579 348H1593M1579 471H1593" stroke="#bbb"/>
<path d="M1581 361l3 2l3-2l3 2M1581 365l3 2l3-2l3 2" fill="none" stroke="#d03030"/>
<text x="1587" y="386" text-anchor="middle" style="font-size:10px;font-weight:bold;fill:#2040a0">RSI</text>
<text x="1587" y="410" text-anchor="middle" style="font-size:16px;font-weight:bold;fill:#a84848">$</text>
<path d="M1587 425l3 3h-2v3h3v-2l3 3l-3 3v-2h-3v3h2l-3 3l-3-3h2v-3h-3v2l-3-3l3-3v2h3v-3h-2z" fill="#1a58c0"/>
<path d="M1581 462l1-4l8-8l3 3l-8 8z" fill="#e0a040" stroke="#a07020"/>
<text x="1587" y="487" text-anchor="middle" style="font-size:9px;fill:#1a58a0">FS</text>
<path d="M1582 509a4 4 0 0 1 8-1M1590 510a4 4 0 0 1-8 1" fill="none" stroke="#40a040" stroke-width="1.6"/>
<text class="bl" x="1587" y="532">1</text><text class="bl" x="1587" y="555">5</text><text class="bl" x="1587" y="577">15</text><text class="bl" x="1587" y="601">30</text><text class="bl" x="1587" y="624">60</text>
<path d="M1577.5 660V636.5H1600" fill="#fff" stroke="#aaa"/><rect x="1578" y="637" width="22" height="23" fill="#fff"/>
<text class="bl" x="1589" y="648">日</text><text class="bl" x="1588" y="670">周</text><text class="bl" x="1588" y="693">月</text><text class="bl" x="1587" y="716">N</text><text class="bl" x="1588" y="740">多</text><text class="bl" x="1588" y="763">季</text><text class="bl" x="1588" y="786">年</text>

<!-- status bar -->
<rect x="0" y="839" width="1575" height="21" fill="#f2f2f2"/>
<text class="sk" x="0" y="850">上证</text><text class="st" x="27" y="850">2809.98</text><text class="st" x="85" y="850">45.99</text><text class="st" x="126" y="850">1.66%</text><text class="sk" x="170" y="850">1256亿</text>
<text class="sk" x="220" y="850">深证</text><text class="st" x="248" y="850">10364.3</text><text class="st" x="301" y="850">254.20</text><text class="st" x="346" y="850">2.51%</text><text class="sk" x="390" y="850">2080亿</text>
<text class="sk" x="441" y="850">中小</text><text class="st" x="468" y="850">6804.16</text><text class="st" x="522" y="850">171.38</text><text class="st" x="566" y="850">2.58%</text><text class="sk" x="610" y="850">961.4亿</text>
<path d="M660.5 840V860M768.5 840V860" stroke="#bbb"/>
<rect x="672" y="844" width="15" height="5" fill="#e81010"/><rect x="688" y="844" width="9" height="5" fill="#108a10"/>
<rect x="724" y="844" width="15" height="5" fill="#e81010"/><rect x="740" y="844" width="8" height="5" fill="#108a10"/>
<path d="M667 852h39M667 855h39M727 852h30M727 855h30" stroke="#e81010" stroke-dasharray="5 1.5" stroke-width="1.5"/>
<path d="M710 858l-3-4h2v-3h2v3h2zM719 858l-3-4h2v-3h2v3h2zM762 850l3 4h-2v3h-2v-3h-2z" fill="#e81010"/>
<text class="sk" x="774" y="850">北京双线主站2</text>
<rect x="1492.5" y="845.5" width="12" height="11" fill="#eee" stroke="#888"/><path d="M1494 848h9M1494 851h9M1494 854h9" stroke="#aaa"/>
<circle cx="1517" cy="851" r="6" fill="#d8d030" stroke="#a0a020"/><path d="M1517 847v8" stroke="#555" stroke-width="1.5"/>
<path d="M1530 846l8 0l-3 7l-2-2l-2 5l-2-2z" fill="#888"/>
<path d="M1552 846l3 4h-6zM1552 850l3 4h-6z" fill="#777"/><rect x="1550" y="854" width="4" height="1.5" fill="#777"/>
<path d="M1564 846v6M1564 855v1.5" stroke="#888" stroke-width="1.5"/>

<!-- taskbar -->
<rect x="0" y="860" width="1600" height="40" fill="url(#bar)"/>
<rect x="0" y="860" width="1600" height="1" fill="#777"/>
<circle cx="27" cy="881" r="18" fill="url(#orb)" stroke="#1a3a50"/>
<path d="M20 875q3-2 6 0v6q-3-2-6 0z" fill="#e07030"/><path d="M27 875q3 2 6 0v6q-3 2-6 0z" fill="#90c040"/><path d="M20 882q3-2 6 0v6q-3-2-6 0z" fill="#58a0e0"/><path d="M27 882q3 2 6 0v6q-3 2-6 0z" fill="#e8c040"/>
<path d="M58 865V895M62 865V895M66 865V895" stroke="#444" stroke-dasharray="1 3"/>
<path d="M90 865L112 890" stroke="#1a2ac0" stroke-width="3"/><ellipse cx="108" cy="883" rx="7" ry="5" fill="#e8b040"/><path d="M112 892l6-4" stroke="#1a2ac0" stroke-width="3"/>
<rect x="138.5" y="862.5" width="157" height="36" rx="2" fill="url(#btn)" stroke="#888"/>
<g fill="none" stroke-width="16" transform="rotate(-90 163 881)"><circle cx="163" cy="881" r="8" stroke="#f04040" stroke-dasharray="10.06 40.21"/><circle cx="163" cy="881" r="8" stroke="#f0c030" stroke-dasharray="10.06 40.21" stroke-dashoffset="-10.05"/><circle cx="163" cy="881" r="8" stroke="#50d040" stroke-dasharray="10.06 40.21" stroke-dashoffset="-20.1"/><circle cx="163" cy="881" r="8" stroke="#30a8f0" stroke-dasharray="10.06 40.21" stroke-dashoffset="-30.15"/><circle cx="163" cy="881" r="8" stroke="#8a60e0" stroke-dasharray="10.06 40.21" stroke-dashoffset="-40.2"/></g>
<circle cx="163" cy="881" r="2.5" fill="#fff"/>
<text class="tb" x="183" y="879">西瓜视频 - 头条...</text>
<circle cx="329" cy="880" r="15.5" fill="#fff" stroke="#1a58c0" stroke-width="1.5"/>
<text x="329" y="880" text-anchor="middle" style="font-size:16px;font-weight:bold;fill:#1a58c0">iu</text>
<rect x="362.5" y="862.5" width="158" height="36" rx="2" fill="url(#btn2)" stroke="#bbb"/>
<rect x="371" y="864" width="32" height="32" fill="#d62a2a"/><path d="M373 888C378 876 392 876 401 866C398 880 391 890 379 894Z" fill="#f4f4f4"/>
<text class="tb" x="407" y="880">通达信金融终端V...</text>
<rect x="524.5" y="862.5" width="157" height="36" rx="2" fill="url(#btn)" stroke="#888"/>
<rect x="536" y="866" width="28" height="28" rx="6" fill="#1ea0e8"/>
<text x="550" y="879" text-anchor="middle" style="font-size:26px;font-weight:bold;fill:#fff">e</text>
<text class="tb" x="569" y="879">热点资讯</text>
<path d="M1270 866V896M1274 866V896M1278 866V896" stroke="#444" stroke-dasharray="1 3"/>
<rect x="1284" y="876" width="15" height="9" rx="1" fill="#aaa" stroke="#777"/><path d="M1286 878.5h11M1286 881h11" stroke="#666" stroke-dasharray="1.5 1"/><path d="M1291 875c0-3 3-2 6-4" fill="none" stroke="#888"/>
<path d="M1319 879l3.5 4h-7z" fill="#ddd"/>
<circle cx="1343.5" cy="881" r="7.5" fill="#d8c820" stroke="#6a8a20"/><path d="M1343.5 877v8M1339.5 881h8" stroke="#1a6a1a" stroke-width="2"/>
<rect x="1361" y="875" width="9" height="12" rx="1" fill="#777"/><path d="M1362 882l6 6M1368 882l-6 6" stroke="#e02020" stroke-width="2"/><path d="M1370 878h6M1372 874v4M1375 874v4" stroke="#eee" stroke-width="1.5"/>
<path d="M1385 886v-1M1388 886v-3M1391 886v-5M1394 886v-8M1397 886v-11" stroke="#eee" stroke-width="2"/>
<path d="M1409 878h3l4-4v14l-4-4h-3z" fill="#ddd"/><path d="M1419 877c2 2 2 6 0 8" fill="none" stroke="#888"/>
<text x="1489" y="871.5" text-anchor="middle" style="font-size:12px;fill:#e4e4e4">10:31</text>
<text x="1488.5" y="889" text-anchor="middle" style="font-size:12px;fill:#e4e4e4">2020/4/7 星期二</text>
<rect x="1558" y="874" width="15" height="16" fill="#eee"/><path d="M1560 878h11M1560 881h11M1560 884h11M1560 887h11" stroke="#222"/><rect x="1555" y="874" width="2" height="16" fill="#ddd"/>
<rect x="1568" y="865" width="13" height="13" rx="1.5" fill="#222" stroke="#bbb"/><text x="1574.5" y="871.5" text-anchor="middle" style="font-size:10px;font-weight:bold;fill:#eee">1</text>
<rect x="1586.5" y="862.5" width="13" height="36" fill="#3a3a3a" stroke="#666"/>
</svg>
</body></html>
